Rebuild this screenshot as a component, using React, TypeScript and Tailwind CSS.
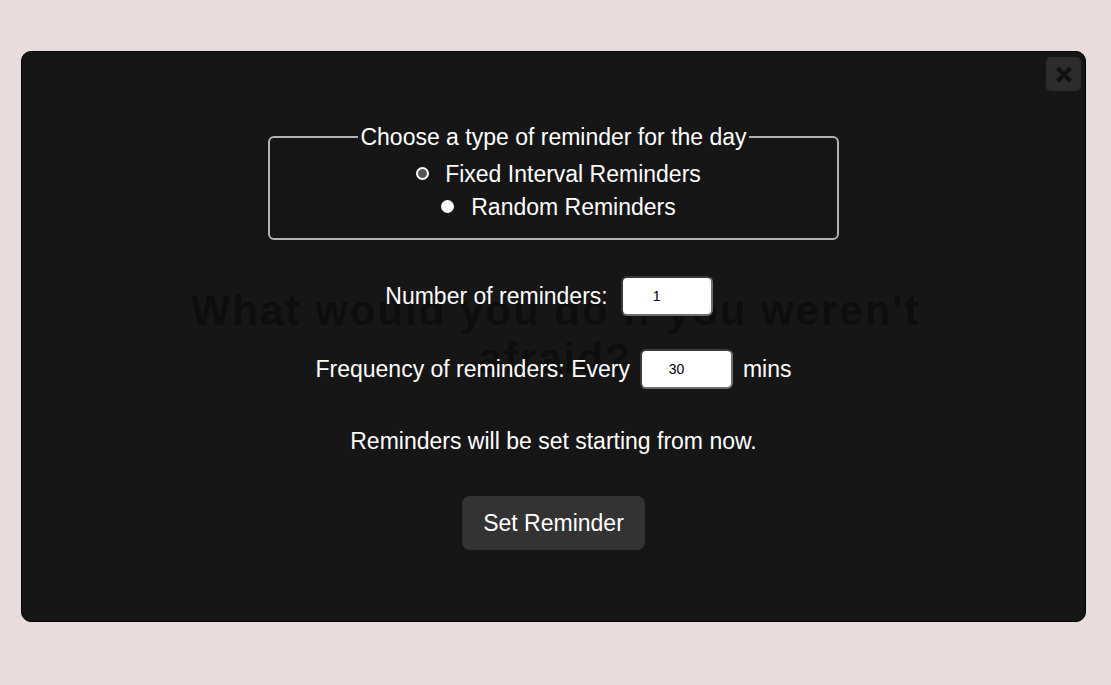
import React from "react";

export default function App() {
  return (
    <div
      className="relative min-h-screen w-full bg-[#e8dddd]"
      style={{ fontFamily: "'Liberation Sans', Arial, sans-serif" }}
    >
      {/* page content behind the modal */}
      <div className="pt-[287px]">
        <h1 className="mx-auto w-[820px] text-center text-[42px] font-bold leading-[48px] tracking-[2px] text-[#828282]">
          What would you do if you weren't afraid?
        </h1>
      </div>

      {/* modal */}
      <div className="absolute left-[21px] top-[51px] h-[571px] w-[1065px] rounded-[10px] border border-black bg-black/90">
        <button className="absolute right-[4px] top-[5px] flex h-[34px] w-[35px] items-center justify-center rounded-[5px] bg-[#2c2c2c]">
          <svg width="18" height="17" viewBox="0 0 18 17">
            <path d="M2.5 2 L15.5 15 M15.5 2 L2.5 15" stroke="#111" strokeWidth="4.2" strokeLinecap="butt" />
          </svg>
        </button>

        <div className="flex flex-col items-center pt-[72px] text-[23px] text-white">
          <fieldset className="w-[571px] rounded-[6px] border-2 border-[#b3b3b3] px-0 pb-[15px] pt-[7px]">
            <legend className="mx-auto px-[2px] leading-[26px]">Choose a type of reminder for the day</legend>
            <div className="flex h-[33px] items-center justify-center gap-[16px] pl-[10px]">
              <span className="h-[13px] w-[13px] rounded-full border-2 border-white bg-[#555]" />
              <span className="leading-[26px]">Fixed Interval Reminders</span>
            </div>
            <div className="flex h-[33px] items-center justify-center gap-[17px] pl-[10px]">
              <span className="h-[13px] w-[13px] rounded-full bg-white" />
              <span className="leading-[26px]">Random Reminders</span>
            </div>
          </fieldset>

          <div className="mt-[36px] flex items-center justify-center gap-[13px] pr-[9px]">
            <span className="leading-[26px]">Number of reminders:</span>
            <input
              type="text"
              defaultValue="1"
              className="h-[40px] w-[92px] rounded-[6px] border-2 border-b-[#6e6e6e] border-l-[#3a3a3a] border-r-[#6e6e6e] border-t-[#3a3a3a] bg-white pr-[20px] text-center text-[14px] text-black outline-none"
            />
          </div>

          <div className="mt-[33px] flex items-center justify-center gap-[10px]">
            <span className="leading-[26px]">Frequency of reminders: Every</span>
            <input
              type="text"
              defaultValue="30"
              className="h-[40px] w-[93px] rounded-[6px] border-2 border-b-[#6e6e6e] border-l-[#3a3a3a] border-r-[#6e6e6e] border-t-[#3a3a3a] bg-white pr-[20px] text-center text-[14px] text-black outline-none"
            />
            <span className="leading-[26px]">mins</span>
          </div>

          <p className="mt-[39px] leading-[26px]">Reminders will be set starting from now.</p>

          <button className="mt-[42px] h-[54px] w-[183px] rounded-[8px] bg-[#333333] text-[23px] text-white">
            Set Reminder
          </button>
        </div>
      </div>
    </div>
  );
}
